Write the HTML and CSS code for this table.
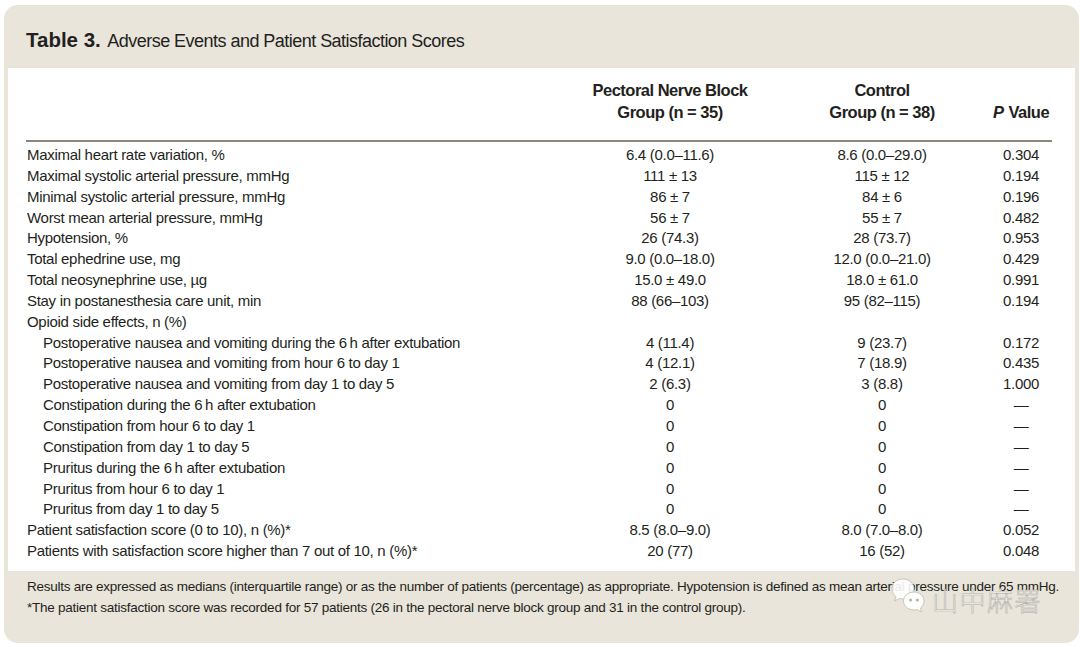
FILE: index.html
```html
<!DOCTYPE html>
<html>
<head>
<meta charset="utf-8">
<link rel="stylesheet" href="styles.css">
</head>
<body>
<div class="card">
  <div class="title"><span class="tnum">Table 3.</span> Adverse Events and Patient Satisfaction Scores</div>
  <div class="body">
    <table class="data">
      <colgroup><col class="c-label"><col class="c-pnb"><col class="c-ctl"><col class="c-p"></colgroup>
      <thead>
        <tr><th></th><th>Pectoral Nerve Block<br>Group (n = 35)</th><th>Control<br>Group (n = 38)</th><th class="pv"><i>P</i> Value</th></tr>
      </thead>
      <tbody>
        <tr class="first"><td>Maximal heart rate variation, %</td><td>6.4 (0.0–11.6)</td><td>8.6 (0.0–29.0)</td><td>0.304</td></tr>
        <tr><td>Maximal systolic arterial pressure, mmHg</td><td>111 ± 13</td><td>115 ± 12</td><td>0.194</td></tr>
        <tr><td>Minimal systolic arterial pressure, mmHg</td><td>86 ± 7</td><td>84 ± 6</td><td>0.196</td></tr>
        <tr><td>Worst mean arterial pressure, mmHg</td><td>56 ± 7</td><td>55 ± 7</td><td>0.482</td></tr>
        <tr><td>Hypotension, %</td><td>26 (74.3)</td><td>28 (73.7)</td><td>0.953</td></tr>
        <tr><td>Total ephedrine use, mg</td><td>9.0 (0.0–18.0)</td><td>12.0 (0.0–21.0)</td><td>0.429</td></tr>
        <tr><td>Total neosynephrine use, µg</td><td>15.0 ± 49.0</td><td>18.0 ± 61.0</td><td>0.991</td></tr>
        <tr><td>Stay in postanesthesia care unit, min</td><td>88 (66–103)</td><td>95 (82–115)</td><td>0.194</td></tr>
        <tr><td>Opioid side effects, n (%)</td><td></td><td></td><td></td></tr>
        <tr class="sub"><td>Postoperative nausea and vomiting during the 6&#8201;h after extubation</td><td>4 (11.4)</td><td>9 (23.7)</td><td>0.172</td></tr>
        <tr class="sub"><td>Postoperative nausea and vomiting from hour 6 to day 1</td><td>4 (12.1)</td><td>7 (18.9)</td><td>0.435</td></tr>
        <tr class="sub"><td>Postoperative nausea and vomiting from day 1 to day 5</td><td>2 (6.3)</td><td>3 (8.8)</td><td>1.000</td></tr>
        <tr class="sub"><td>Constipation during the 6&#8201;h after extubation</td><td>0</td><td>0</td><td>—</td></tr>
        <tr class="sub"><td>Constipation from hour 6 to day 1</td><td>0</td><td>0</td><td>—</td></tr>
        <tr class="sub"><td>Constipation from day 1 to day 5</td><td>0</td><td>0</td><td>—</td></tr>
        <tr class="sub"><td>Pruritus during the 6&#8201;h after extubation</td><td>0</td><td>0</td><td>—</td></tr>
        <tr class="sub"><td>Pruritus from hour 6 to day 1</td><td>0</td><td>0</td><td>—</td></tr>
        <tr class="sub"><td>Pruritus from day 1 to day 5</td><td>0</td><td>0</td><td>—</td></tr>
        <tr><td>Patient satisfaction score (0 to 10), n (%)*</td><td>8.5 (8.0–9.0)</td><td>8.0 (7.0–8.0)</td><td>0.052</td></tr>
        <tr><td>Patients with satisfaction score higher than 7 out of 10, n (%)*</td><td>20 (77)</td><td>16 (52)</td><td>0.048</td></tr>
      </tbody>
    </table>
  </div>
  <div class="notes">
    <p>Results are expressed as medians (interquartile range) or as the number of patients (percentage) as appropriate. Hypotension is defined as mean arterial pressure under 65 mmHg.</p>
    <p>*The patient satisfaction score was recorded for 57 patients (26 in the pectoral nerve block group and 31 in the control group).</p>
  </div>
  <div class="watermark">
    <svg class="wm-icon" width="34" height="37" viewBox="0 0 34 37">
      <path d="M12 2 C5.5 2 1 6.5 1 12 C1 15.2 2.6 17.9 5 19.7 L3.6 24 L8.6 21.4 C9.7 21.8 10.8 22 12 22 C18.3 22 23 17.5 23 12 C23 6.5 18.3 2 12 2 Z" fill="rgba(255,255,255,0.9)" stroke="#c2bfb6" stroke-width="0.9"/>
      <path d="M23 15 C17.2 15 12.5 19 12.5 24 C12.5 29 17.2 33 23 33 C24.1 33 25.1 32.8 26.1 32.5 L30.6 35 L29.4 31 C31.6 29.4 33 26.9 33 24 C33 19 28.6 15 23 15 Z" fill="rgba(255,255,255,0.95)" stroke="#c2bfb6" stroke-width="0.9"/>
      <circle cx="19.6" cy="23" r="1.5" fill="#b3b0a7"/>
      <circle cx="26.4" cy="23" r="1.5" fill="#b3b0a7"/>
    </svg>
    <span class="wm-text">山中麻署</span>
  </div>
</div>
</body>
</html>
```
FILE: styles.css
```css
html, body {
  margin: 0;
  padding: 0;
  background: #ffffff;
}
body {
  padding: 5px 1px 4px 4px;
  font-family: "Liberation Sans", Arial, sans-serif;
  color: #231f20;
}
.card {
  position: relative;
  background: #e9e5da;
  border-radius: 14px;
  height: 638px;
  box-sizing: border-box;
  padding: 0 4px;
}
.title {
  height: 63px;
  box-sizing: border-box;
  padding: 23px 0 0 18px;
  font-size: 18px;
  line-height: 24px;
  letter-spacing: -0.53px;
}
.tnum {
  font-weight: bold;
  font-size: 20.5px;
  letter-spacing: 0;
  margin-right: 3px;
}
.body {
  background: #ffffff;
  height: 503px;
  box-sizing: border-box;
  padding: 11px 23px 0 18px;
}
.data {
  width: 1026px;
  table-layout: fixed;
  border-collapse: collapse;
  font-size: 15px;
  letter-spacing: -0.3px;
}
.c-label { width: 540px; }
.c-pnb { width: 208px; }
.c-ctl { width: 216px; }
.c-p { width: 62px; }
.data th {
  font-weight: bold;
  font-size: 16.5px;
  letter-spacing: -0.5px;
  line-height: 22px;
  text-align: center;
  vertical-align: bottom;
  white-space: nowrap;
  padding: 0 0 17px 0;
  border-bottom: 2px solid #8c8778;
}
.data th.pv i {
  margin-right: 1px;
}
.data td {
  padding: 0;
  height: 20.85px;
  line-height: 20.85px;
  text-align: center;
  white-space: nowrap;
}
.data tr.first td {
  padding-top: 3px;
}
.data td:first-child {
  text-align: left;
  padding-left: 1px;
}
.data tr.sub td:first-child {
  padding-left: 17px;
}
.notes {
  padding: 5px 0 0 19px;
  font-size: 13.5px;
  letter-spacing: -0.25px;
  line-height: 21px;
  white-space: nowrap;
}
.notes p {
  margin: 0;
}
.watermark {
  position: absolute;
  left: 887px;
  top: 572px;
  display: flex;
  align-items: flex-start;
  gap: 7px;
}
.wm-text {
  margin-top: 10px;
  font-family: "Noto Sans CJK SC", sans-serif;
  font-size: 26px;
  line-height: 26px;
  font-weight: 300;
  letter-spacing: 1.5px;
  color: rgba(255, 255, 255, 0.9);
  -webkit-text-stroke: 0.6px #b0ada4;
}
```
